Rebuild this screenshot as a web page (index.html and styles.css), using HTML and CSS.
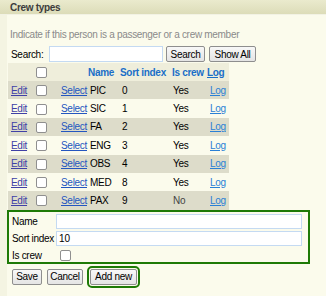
FILE: index.html
```html
<!DOCTYPE html>
<html>
<head>
<meta charset="utf-8">
<link rel="stylesheet" href="styles.css">
</head>
<body>
<div class="titlebar">Crew types</div>
<div class="content">
  <p class="desc">Indicate if this person is a passenger or a crew member</p>
  <div class="search">
    <span class="search-label">Search:</span>
    <input class="search-input" type="text">
    <button class="btn btn-search">Search</button>
    <button class="btn btn-all">Show All</button>
  </div>
  <table class="grid">
    <colgroup>
      <col class="c-edit"><col class="c-chk"><col class="c-sel"><col class="c-name"><col class="c-sort"><col class="c-crew"><col class="c-log">
    </colgroup>
    <thead>
      <tr>
        <th></th><th><span class="cb"></span></th><th></th>
        <th class="h-name">Name</th><th class="h-sort">Sort index</th><th class="h-crew">Is crew</th><th class="h-log"><a href="#">Log</a></th>
      </tr>
    </thead>
    <tbody>
      <tr class="dark"><td><a class="edit" href="#">Edit</a></td><td><span class="cb"></span></td><td class="sel"><a href="#">Select</a></td><td class="name">PIC</td><td class="sort">0</td><td class="crew">Yes</td><td class="log"><a href="#">Log</a></td></tr>
      <tr><td><a class="edit" href="#">Edit</a></td><td><span class="cb"></span></td><td class="sel"><a href="#">Select</a></td><td class="name">SIC</td><td class="sort">1</td><td class="crew">Yes</td><td class="log"><a href="#">Log</a></td></tr>
      <tr class="dark"><td><a class="edit" href="#">Edit</a></td><td><span class="cb"></span></td><td class="sel"><a href="#">Select</a></td><td class="name">FA</td><td class="sort">2</td><td class="crew">Yes</td><td class="log"><a href="#">Log</a></td></tr>
      <tr><td><a class="edit" href="#">Edit</a></td><td><span class="cb"></span></td><td class="sel"><a href="#">Select</a></td><td class="name">ENG</td><td class="sort">3</td><td class="crew">Yes</td><td class="log"><a href="#">Log</a></td></tr>
      <tr class="dark"><td><a class="edit" href="#">Edit</a></td><td><span class="cb"></span></td><td class="sel"><a href="#">Select</a></td><td class="name">OBS</td><td class="sort">4</td><td class="crew">Yes</td><td class="log"><a href="#">Log</a></td></tr>
      <tr><td><a class="edit" href="#">Edit</a></td><td><span class="cb"></span></td><td class="sel"><a href="#">Select</a></td><td class="name">MED</td><td class="sort">8</td><td class="crew">Yes</td><td class="log"><a href="#">Log</a></td></tr>
      <tr class="dark"><td><a class="edit" href="#">Edit</a></td><td><span class="cb"></span></td><td class="sel"><a href="#">Select</a></td><td class="name">PAX</td><td class="sort">9</td><td class="crew no">No</td><td class="log"><a href="#">Log</a></td></tr>
    </tbody>
  </table>
  <div class="form">
    <div class="frow"><span class="flabel">Name</span><input class="finput" type="text"></div>
    <div class="frow"><span class="flabel">Sort index</span><input class="finput" type="text" value="10"></div>
    <div class="frow"><span class="flabel">Is crew</span><span class="cb cb-form"></span></div>
  </div>
  <div class="actions">
    <button class="btn btn-save">Save</button>
    <button class="btn btn-cancel">Cancel</button>
    <button class="btn btn-hl">Add new</button>
  </div>
</div>
</body>
</html>
```
FILE: styles.css
```css
html, body {
  margin: 0;
  padding: 0;
}
body {
  background: #f4f4e2;
  font-family: "Liberation Sans", Arial, sans-serif;
  font-size: 10px;
  letter-spacing: -0.3px;
  color: #000;
  width: 326px;
  height: 296px;
  overflow: hidden;
}
.titlebar {
  height: 14px;
  line-height: 15px;
  padding-left: 10px;
  font-weight: bold;
  color: #3c3c3c;
  background: linear-gradient(#eaeacd, #dcdcb8);
  border-bottom: 1px solid #f2f2e4;
}
.content {
  margin-left: 7px;
  background: #fbfbec;
  height: 281px;
  padding-top: 1px;
}
.desc {
  margin: 13px 0 0 3px;
  color: #8a8a8a;
  line-height: 12px;
}
.search {
  display: flex;
  align-items: center;
  margin-top: 5px;
  height: 16px;
}
.search-label {
  margin-left: 4px;
  width: 38px;
}
.search-input {
  box-sizing: border-box;
  width: 114px;
  height: 16px;
  border: 1px solid #c4daf2;
  background: #fff;
  margin: 0;
  padding: 0 2px;
}
.btn {
  box-sizing: border-box;
  height: 16px;
  padding: 0;
  margin: 0 0 0 4px;
  font-family: "Liberation Sans", Arial, sans-serif;
  font-size: 10px;
  letter-spacing: -0.3px;
  color: #000;
  background: linear-gradient(#f8f8f8, #e4e4e4);
  border: 1px solid #8e8e8e;
  border-radius: 2px;
  line-height: 13px;
  text-align: center;
}
.btn-search { width: 39px; margin-left: 3px; }
.btn-all { width: 47px; margin-left: 4px; }
.grid {
  margin-top: 1px;
  margin-left: 1px;
  border-collapse: collapse;
  table-layout: fixed;
  width: 221px;
}
.c-edit { width: 25px; }
.c-chk { width: 21px; }
.c-sel { width: 34px; }
.c-name { width: 32px; }
.c-sort { width: 52px; }
.c-crew { width: 35px; }
.c-log { width: 22px; }
.grid th, .grid td {
  padding: 0;
  height: 18px;
  text-align: left;
  white-space: nowrap;
  overflow: visible;
}
.grid tbody td { height: 18.4px; }
.grid thead tr {
  background: #efeedb;
}
.grid th {
  color: #1a6ec8;
  font-weight: bold;
}
.grid th a {
  color: #1a6ec8;
}
.grid tbody tr.dark {
  background: #dddcca;
}
.grid td:first-child {
  padding-left: 3px;
}
.grid td.sel { padding-left: 7px; }
.grid td.name, .h-name { padding-left: 2px; }
.grid td.sort, .h-sort { padding-left: 2px; }
.h-crew { padding-left: 2px; }
.grid td.crew { padding-left: 1px; }
.grid td.no { color: #444; }
.h-log, .grid td.log { padding-left: 3px; }
a {
  text-decoration: underline;
}
a.edit { color: #4040a6; }
.sel a { color: #2456c0; }
.log a { color: #2a80d6; }
.cb {
  display: inline-block;
  box-sizing: border-box;
  width: 11px;
  height: 11px;
  border: 1px solid #8f8f8f;
  border-radius: 2px;
  background: #fff;
  vertical-align: middle;
  margin-left: 3px;
}
.grid th .cb { margin-left: 3px; }
.form {
  margin-top: 0;
  width: 303px;
  box-sizing: border-box;
  border: 2px solid #1e7a06;
  padding: 1px 0 0 3px;
  height: 54px;
}
.frow {
  display: flex;
  align-items: center;
  height: 17px;
}
.flabel {
  width: 44px;
  white-space: nowrap;
}
.finput {
  box-sizing: border-box;
  width: 246px;
  height: 15px;
  border: 1px solid #c4daf2;
  background: #fff;
  margin: 0;
  padding: 0 2px;
  font-family: "Liberation Sans", Arial, sans-serif;
  font-size: 10px;
}
.cb-form {
  margin-left: 4px;
}
.actions {
  display: flex;
  align-items: center;
  margin-top: 5px;
}
.btn-save { width: 30px; margin-left: 5px; }
.btn-cancel { width: 36px; margin-left: 5px; }
.btn-hl {
  width: 47px;
  margin-left: 7px;
  outline: 2px solid #1e7a06;
  outline-offset: 1px;
}
```
